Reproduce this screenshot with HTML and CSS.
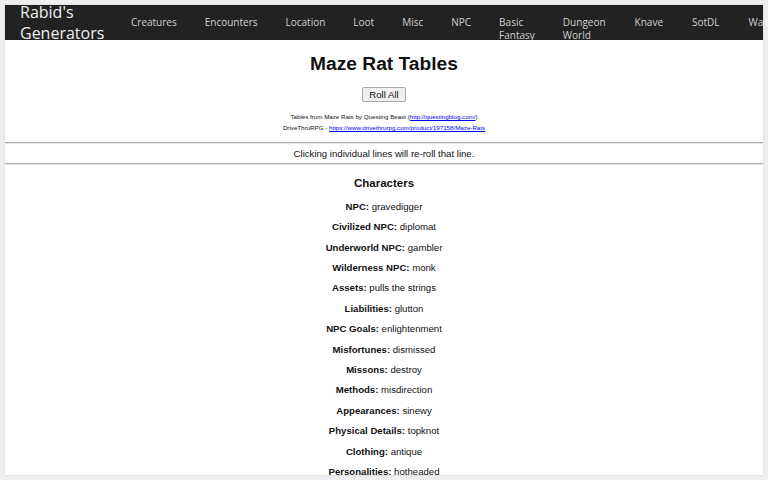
FILE: index.html
```html
<!DOCTYPE html>
<html lang="en">
<head>
    <meta charset="UTF-8">
    <meta name="viewport" content="width=device-width, initial-scale=1.0">
    <title>Maze Rat Tables</title>
    <link rel="stylesheet" href="styles.css">
</head>
<body>
    <div class="page">
        <nav class="navbar">
            <a class="brand" href="#">Rabid's Generators</a>
            <ul class="nav-links">
                <li><a href="#">Creatures</a></li>
                <li><a href="#">Encounters</a></li>
                <li><a href="#">Location</a></li>
                <li><a href="#">Loot</a></li>
                <li><a href="#">Misc</a></li>
                <li><a href="#">NPC</a></li>
                <li class="narrow"><a href="#">Basic Fantasy</a></li>
                <li class="narrow"><a href="#">Dungeon World</a></li>
                <li><a href="#">Knave</a></li>
                <li><a href="#">SotDL</a></li>
                <li><a href="#">Warlock</a></li>
            </ul>
        </nav>

        <h1>Maze Rat Tables</h1>
        <div class="actions">
            <button type="button">Roll All</button>
        </div>
        <div class="credits">
            Tables from Maze Rats by Questing Beast (<a href="#">http://questingblog.com/</a>)<br>
            DriveThruRPG - <a href="#">https://www.drivethrurpg.com/product/197158/Maze-Rats</a>
        </div>

        <hr>
        <p class="hint">Clicking individual lines will re-roll that line.</p>
        <hr>

        <div class="table-group">
            <h2>Characters</h2>
            <p class="roll"><b>NPC:</b> gravedigger</p>
            <p class="roll"><b>Civilized NPC:</b> diplomat</p>
            <p class="roll"><b>Underworld NPC:</b> gambler</p>
            <p class="roll"><b>Wilderness NPC:</b> monk</p>
            <p class="roll"><b>Assets:</b> pulls the strings</p>
            <p class="roll"><b>Liabilities:</b> glutton</p>
            <p class="roll"><b>NPC Goals:</b> enlightenment</p>
            <p class="roll"><b>Misfortunes:</b> dismissed</p>
            <p class="roll"><b>Missons:</b> destroy</p>
            <p class="roll"><b>Methods:</b> misdirection</p>
            <p class="roll"><b>Appearances:</b> sinewy</p>
            <p class="roll"><b>Physical Details:</b> topknot</p>
            <p class="roll"><b>Clothing:</b> antique</p>
            <p class="roll"><b>Personalities:</b> hotheaded</p>
            <p class="roll"><b>Mannerisms:</b> whispers</p>
        </div>
    </div>
</body>
</html>
```

FILE: styles.css
```css
html, body {
    margin: 0;
    padding: 0;
}
body {
    background-color: #efefef;
    color: #111;
    font-family: "Liberation Sans", Arial, sans-serif;
    padding: 5px;
}
.page {
    background-color: #fff;
    height: 470px;
    overflow: hidden;
    box-shadow: 0 0 2px rgba(0, 0, 0, 0.15);
}

/* top bar */
.navbar {
    display: flex;
    align-items: flex-start;
    height: 35px;
    background-color: #222;
    overflow: hidden;
    font-family: "Open Sans", sans-serif;
}
.brand {
    flex: 0 0 97px;
    align-self: center;
    padding-left: 15px;
    font-size: 16px;
    line-height: 21px;
    color: #eee;
    text-decoration: none;
}
.nav-links {
    display: flex;
    margin: 0;
    padding: 0;
    list-style: none;
}
.nav-links li {
    flex: 0 0 auto;
    padding: 11px 14px 0;
    font-size: 10px;
    line-height: 13px;
}
.nav-links li:nth-child(n+9) {
    padding-left: 15px;
}
.nav-links a {
    display: block;
    color: #d0d0d0;
    text-decoration: none;
    white-space: nowrap;
}
.nav-links li.narrow a {
    width: min-content;
    white-space: normal;
}

/* header */
h1 {
    font-size: 19.2px;
    line-height: 22px;
    margin: 12.9px 0 9px;
    text-align: center;
}
.actions {
    text-align: center;
}
.actions button {
    font-family: "Liberation Sans", Arial, sans-serif;
    font-size: 9.6px;
    line-height: 11px;
    padding: 1px 6px;
    color: #111;
    background-color: #efefef;
    border: 1px solid #a8a8a8;
    border-radius: 2px;
}
.credits {
    margin: 9px 0;
    font-size: 6.2px;
    line-height: 11px;
    text-align: center;
}
.credits a {
    color: #00e;
}
hr {
    margin: 0;
    border: 0;
    border-top: 1px solid #aaa;
    border-bottom: 1px solid #e8e8e8;
}
.hint {
    margin: 4px 0;
    font-size: 9.6px;
    line-height: 11px;
    text-align: center;
}

/* tables */
.table-group {
    text-align: center;
}
.table-group h2 {
    font-size: 11.5px;
    line-height: 13px;
    margin: 12px 0 11px;
}
.roll {
    font-size: 9.6px;
    line-height: 11px;
    margin: 9.4px 0;
    cursor: pointer;
}
```
